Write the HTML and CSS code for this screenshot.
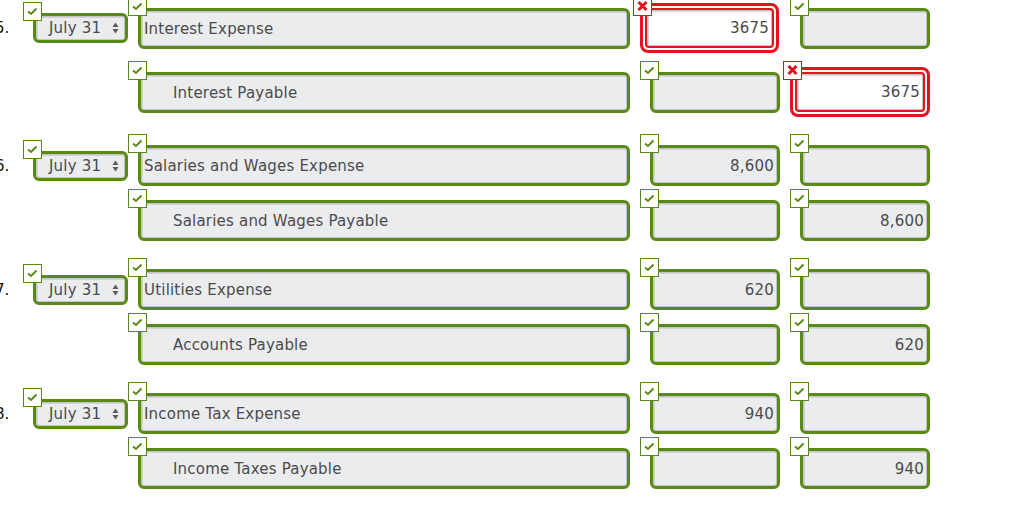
FILE: index.html
```html
<!DOCTYPE html>
<html>
<head>
<meta charset="utf-8">
<link rel="stylesheet" href="styles.css">
</head>
<body>
<div class="sheet">

  <div class="entry">
    <div class="row">
      <div class="num">5.</div>
      <div class="date-cell">
        <div class="field date"><span>July 31</span><svg class="spin" width="7" height="12" viewBox="0 0 7 12"><path d="M0.5 5 L3.5 0.5 L6.5 5 Z M0.5 7 L3.5 11.5 L6.5 7 Z"/></svg>
          <svg class="mark ok" width="19" height="19" viewBox="0 0 19 19"><rect x="0.5" y="0.5" width="18" height="18"/><path d="M5 9.5 L8 12 L13.5 6.5"/></svg></div>
      </div>
      <div class="acct-cell">
        <div class="field acct"><span>Interest Expense</span>
          <svg class="mark ok" width="19" height="19" viewBox="0 0 19 19"><rect x="0.5" y="0.5" width="18" height="18"/><path d="M5 9.5 L8 12 L13.5 6.5"/></svg></div>
      </div>
      <div class="amt-cell">
        <div class="wrong wrong-debit"><div class="wrong-inner">3675</div>
          <svg class="mark bad" width="19" height="19" viewBox="0 0 19 19"><rect x="0.5" y="0.5" width="18" height="18"/><path d="M5.5 5 L13.5 13 M13.5 5 L5.5 13"/></svg></div>
      </div>
      <div class="amt-cell">
        <div class="field amt"><span></span>
          <svg class="mark ok" width="19" height="19" viewBox="0 0 19 19"><rect x="0.5" y="0.5" width="18" height="18"/><path d="M5 9.5 L8 12 L13.5 6.5"/></svg></div>
      </div>
    </div>
    <div class="row">
      <div class="num"></div>
      <div class="date-cell"></div>
      <div class="acct-cell">
        <div class="field acct credit"><span>Interest Payable</span>
          <svg class="mark ok" width="19" height="19" viewBox="0 0 19 19"><rect x="0.5" y="0.5" width="18" height="18"/><path d="M5 9.5 L8 12 L13.5 6.5"/></svg></div>
      </div>
      <div class="amt-cell">
        <div class="field amt"><span></span>
          <svg class="mark ok" width="19" height="19" viewBox="0 0 19 19"><rect x="0.5" y="0.5" width="18" height="18"/><path d="M5 9.5 L8 12 L13.5 6.5"/></svg></div>
      </div>
      <div class="amt-cell">
        <div class="wrong wrong-credit"><div class="wrong-inner">3675</div>
          <svg class="mark bad" width="19" height="19" viewBox="0 0 19 19"><rect x="0.5" y="0.5" width="18" height="18"/><path d="M5.5 5 L13.5 13 M13.5 5 L5.5 13"/></svg></div>
      </div>
    </div>
  </div>

  <div class="entry">
    <div class="row">
      <div class="num">6.</div>
      <div class="date-cell">
        <div class="field date"><span>July 31</span><svg class="spin" width="7" height="12" viewBox="0 0 7 12"><path d="M0.5 5 L3.5 0.5 L6.5 5 Z M0.5 7 L3.5 11.5 L6.5 7 Z"/></svg>
          <svg class="mark ok" width="19" height="19" viewBox="0 0 19 19"><rect x="0.5" y="0.5" width="18" height="18"/><path d="M5 9.5 L8 12 L13.5 6.5"/></svg></div>
      </div>
      <div class="acct-cell">
        <div class="field acct"><span>Salaries and Wages Expense</span>
          <svg class="mark ok" width="19" height="19" viewBox="0 0 19 19"><rect x="0.5" y="0.5" width="18" height="18"/><path d="M5 9.5 L8 12 L13.5 6.5"/></svg></div>
      </div>
      <div class="amt-cell">
        <div class="field amt"><span>8,600</span>
          <svg class="mark ok" width="19" height="19" viewBox="0 0 19 19"><rect x="0.5" y="0.5" width="18" height="18"/><path d="M5 9.5 L8 12 L13.5 6.5"/></svg></div>
      </div>
      <div class="amt-cell">
        <div class="field amt"><span></span>
          <svg class="mark ok" width="19" height="19" viewBox="0 0 19 19"><rect x="0.5" y="0.5" width="18" height="18"/><path d="M5 9.5 L8 12 L13.5 6.5"/></svg></div>
      </div>
    </div>
    <div class="row">
      <div class="num"></div>
      <div class="date-cell"></div>
      <div class="acct-cell">
        <div class="field acct credit"><span>Salaries and Wages Payable</span>
          <svg class="mark ok" width="19" height="19" viewBox="0 0 19 19"><rect x="0.5" y="0.5" width="18" height="18"/><path d="M5 9.5 L8 12 L13.5 6.5"/></svg></div>
      </div>
      <div class="amt-cell">
        <div class="field amt"><span></span>
          <svg class="mark ok" width="19" height="19" viewBox="0 0 19 19"><rect x="0.5" y="0.5" width="18" height="18"/><path d="M5 9.5 L8 12 L13.5 6.5"/></svg></div>
      </div>
      <div class="amt-cell">
        <div class="field amt"><span>8,600</span>
          <svg class="mark ok" width="19" height="19" viewBox="0 0 19 19"><rect x="0.5" y="0.5" width="18" height="18"/><path d="M5 9.5 L8 12 L13.5 6.5"/></svg></div>
      </div>
    </div>
  </div>

  <div class="entry">
    <div class="row">
      <div class="num">7.</div>
      <div class="date-cell">
        <div class="field date"><span>July 31</span><svg class="spin" width="7" height="12" viewBox="0 0 7 12"><path d="M0.5 5 L3.5 0.5 L6.5 5 Z M0.5 7 L3.5 11.5 L6.5 7 Z"/></svg>
          <svg class="mark ok" width="19" height="19" viewBox="0 0 19 19"><rect x="0.5" y="0.5" width="18" height="18"/><path d="M5 9.5 L8 12 L13.5 6.5"/></svg></div>
      </div>
      <div class="acct-cell">
        <div class="field acct"><span>Utilities Expense</span>
          <svg class="mark ok" width="19" height="19" viewBox="0 0 19 19"><rect x="0.5" y="0.5" width="18" height="18"/><path d="M5 9.5 L8 12 L13.5 6.5"/></svg></div>
      </div>
      <div class="amt-cell">
        <div class="field amt"><span>620</span>
          <svg class="mark ok" width="19" height="19" viewBox="0 0 19 19"><rect x="0.5" y="0.5" width="18" height="18"/><path d="M5 9.5 L8 12 L13.5 6.5"/></svg></div>
      </div>
      <div class="amt-cell">
        <div class="field amt"><span></span>
          <svg class="mark ok" width="19" height="19" viewBox="0 0 19 19"><rect x="0.5" y="0.5" width="18" height="18"/><path d="M5 9.5 L8 12 L13.5 6.5"/></svg></div>
      </div>
    </div>
    <div class="row">
      <div class="num"></div>
      <div class="date-cell"></div>
      <div class="acct-cell">
        <div class="field acct credit"><span>Accounts Payable</span>
          <svg class="mark ok" width="19" height="19" viewBox="0 0 19 19"><rect x="0.5" y="0.5" width="18" height="18"/><path d="M5 9.5 L8 12 L13.5 6.5"/></svg></div>
      </div>
      <div class="amt-cell">
        <div class="field amt"><span></span>
          <svg class="mark ok" width="19" height="19" viewBox="0 0 19 19"><rect x="0.5" y="0.5" width="18" height="18"/><path d="M5 9.5 L8 12 L13.5 6.5"/></svg></div>
      </div>
      <div class="amt-cell">
        <div class="field amt"><span>620</span>
          <svg class="mark ok" width="19" height="19" viewBox="0 0 19 19"><rect x="0.5" y="0.5" width="18" height="18"/><path d="M5 9.5 L8 12 L13.5 6.5"/></svg></div>
      </div>
    </div>
  </div>

  <div class="entry">
    <div class="row">
      <div class="num">8.</div>
      <div class="date-cell">
        <div class="field date"><span>July 31</span><svg class="spin" width="7" height="12" viewBox="0 0 7 12"><path d="M0.5 5 L3.5 0.5 L6.5 5 Z M0.5 7 L3.5 11.5 L6.5 7 Z"/></svg>
          <svg class="mark ok" width="19" height="19" viewBox="0 0 19 19"><rect x="0.5" y="0.5" width="18" height="18"/><path d="M5 9.5 L8 12 L13.5 6.5"/></svg></div>
      </div>
      <div class="acct-cell">
        <div class="field acct"><span>Income Tax Expense</span>
          <svg class="mark ok" width="19" height="19" viewBox="0 0 19 19"><rect x="0.5" y="0.5" width="18" height="18"/><path d="M5 9.5 L8 12 L13.5 6.5"/></svg></div>
      </div>
      <div class="amt-cell">
        <div class="field amt"><span>940</span>
          <svg class="mark ok" width="19" height="19" viewBox="0 0 19 19"><rect x="0.5" y="0.5" width="18" height="18"/><path d="M5 9.5 L8 12 L13.5 6.5"/></svg></div>
      </div>
      <div class="amt-cell">
        <div class="field amt"><span></span>
          <svg class="mark ok" width="19" height="19" viewBox="0 0 19 19"><rect x="0.5" y="0.5" width="18" height="18"/><path d="M5 9.5 L8 12 L13.5 6.5"/></svg></div>
      </div>
    </div>
    <div class="row">
      <div class="num"></div>
      <div class="date-cell"></div>
      <div class="acct-cell">
        <div class="field acct credit"><span>Income Taxes Payable</span>
          <svg class="mark ok" width="19" height="19" viewBox="0 0 19 19"><rect x="0.5" y="0.5" width="18" height="18"/><path d="M5 9.5 L8 12 L13.5 6.5"/></svg></div>
      </div>
      <div class="amt-cell">
        <div class="field amt"><span></span>
          <svg class="mark ok" width="19" height="19" viewBox="0 0 19 19"><rect x="0.5" y="0.5" width="18" height="18"/><path d="M5 9.5 L8 12 L13.5 6.5"/></svg></div>
      </div>
      <div class="amt-cell">
        <div class="field amt"><span>940</span>
          <svg class="mark ok" width="19" height="19" viewBox="0 0 19 19"><rect x="0.5" y="0.5" width="18" height="18"/><path d="M5 9.5 L8 12 L13.5 6.5"/></svg></div>
      </div>
    </div>
  </div>

</div>
</body>
</html>
```
FILE: styles.css
```css
html, body {
  margin: 0;
  padding: 0;
  background: #ffffff;
}

body {
  font-family: "DejaVu Sans", Verdana, sans-serif;
  font-size: 15px;
  color: #4a4b4d;
  overflow: hidden;
}

.sheet {
  padding-top: 3px;
}

.entry {
  display: flex;
  flex-direction: column;
  gap: 14px;
  margin-bottom: 28px;
}

.row {
  display: flex;
  align-items: center;
}

.num {
  width: 33px;
  flex: none;
  text-indent: -5px;
  color: #111;
  font-size: 15px;
  white-space: nowrap;
}

.date-cell {
  width: 95px;
  flex: none;
  margin-right: 10px;
}

.acct-cell {
  width: 492px;
  flex: none;
  margin-right: 20px;
}

.amt-cell {
  width: 130px;
  flex: none;
  margin-right: 20px;
}

.field {
  position: relative;
  box-sizing: border-box;
  border: 3px solid #5a8a16;
  border-radius: 6px;
  background: #ebecee;
  box-shadow: inset 0 0 0 1px #c3c4c6, inset 1px 1px 0 1px #d3d4d6;
  display: flex;
  align-items: center;
  padding-top: 1px;
  letter-spacing: 0.2px;
  white-space: nowrap;
}

.date {
  height: 30px;
  padding: 0 6px 0 13px;
  justify-content: space-between;
}

.spin {
  fill: #5a5b5d;
  flex: none;
}

.acct {
  height: 41px;
  padding-left: 3px;
}

.acct.credit {
  padding-left: 32px;
}

.amt {
  height: 41px;
  justify-content: flex-end;
  padding-right: 3px;
}

.mark {
  position: absolute;
  top: -14px;
  left: -13px;
  z-index: 2;
}

.mark rect {
  fill: #ffffff;
  stroke-width: 1;
}

.mark path {
  fill: none;
  stroke-width: 2;
}

.mark.ok rect {
  stroke: #5a8a16;
}

.mark.ok path {
  stroke: #5a8a16;
}

.mark.bad rect {
  stroke: #e3121d;
}

.mark.bad path {
  stroke: #e3121d;
  stroke-width: 3;
}

.wrong {
  position: relative;
  box-sizing: border-box;
  height: 50px;
  margin-left: -10px;
  border: 3px solid #e3121d;
  border-radius: 8px;
  padding: 2px;
  background: #ffffff;
}

.wrong-debit {
  width: 139px;
}

.wrong-credit {
  width: 140px;
}

.wrong-inner {
  box-sizing: border-box;
  height: 100%;
  border: 2px solid #e3121d;
  border-radius: 4px;
  background: #ffffff;
  box-shadow: inset 0 0 0 1px #c6c6c6, inset 1px 1px 0 1px #d8d8d8;
  display: flex;
  align-items: center;
  justify-content: flex-end;
  padding-right: 3px;
  letter-spacing: 0.2px;
}

.wrong .mark {
  top: -9px;
  left: -10px;
}
```
